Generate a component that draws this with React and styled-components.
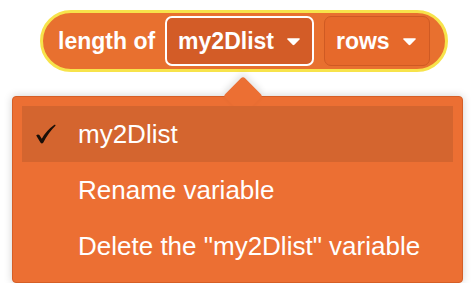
import React from "react";
import styled, { createGlobalStyle } from "styled-components";

const GlobalStyle = createGlobalStyle`
  body {
    margin: 0;
    background: #ffffff;
    font-family: "Liberation Sans", Arial, sans-serif;
  }
`;

const menuItems = [
  { label: "my2Dlist", checked: true },
  { label: "Rename variable" },
  { label: 'Delete the "my2Dlist" variable' },
];

const Caret = () => (
  <svg width="15" height="9" viewBox="0 0 15 9">
    <path
      d="M2 1.2 H13 Q14.4 1.2 13.5 2.4 L8.4 7.8 Q7.5 8.7 6.6 7.8 L1.5 2.4 Q0.6 1.2 2 1.2 Z"
      fill="#ffffff"
    />
  </svg>
);

const CheckMark = () => (
  <svg width="22" height="22" viewBox="0 0 22 22">
    <path
      d="M1.2 12.4 Q3 10.8 4.4 12 L6.8 15.8 Q11 7.8 19.4 1.8 Q21 1.4 20.4 2.8 Q13.4 9.6 8.2 19.8 Q6.9 21.4 5.6 19.8 Z"
      fill="#1a0f08"
    />
  </svg>
);

const App = () => {
  /** UI */
  return (
    <>
      <GlobalStyle />
      <Page>
        <Block>
          <Label>length of</Label>
          <Field $selected>
            my2Dlist
            <Caret />
          </Field>
          <Field>
            rows
            <Caret />
          </Field>
        </Block>
        <Menu>
          <Pointer />
          {menuItems.map((item) => (
            <Item key={item.label} $active={item.checked}>
              <Check>{item.checked && <CheckMark />}</Check>
              {item.label}
            </Item>
          ))}
        </Menu>
      </Page>
    </>
  );
};

export default App;

/** styled component */
const Page = styled.div`
  display: flex;
  flex-direction: column;
  align-items: flex-start;
  padding-top: 10px;
`;

const Block = styled.div`
  display: flex;
  align-items: center;
  box-sizing: border-box;
  height: 62px;
  margin-left: 40px;
  padding: 0 15px 0 15px;
  border: 3px solid #f7e34b;
  border-radius: 31px;
  background-color: #e8702f;
  color: #ffffff;
  font-size: 23px;
  font-weight: bold;
`;

const Label = styled.span`
  margin-right: 10px;
`;

const Field = styled.div`
  display: flex;
  align-items: center;
  gap: 12px;
  box-sizing: border-box;
  height: 50px;
  padding: 0 ${(p) => (p.$selected ? 11 : 12)}px 0
    ${(p) => (p.$selected ? 11 : 11)}px;
  margin-right: 10px;
  border-radius: 7px;
  border: ${(p) => (p.$selected ? "2px solid #ffffff" : "1px solid #cf5a23")};
  background-color: ${(p) => (p.$selected ? "#d35c27" : "#e6692b")};

  &:last-child {
    margin-right: 0;
  }
`;

const Menu = styled.div`
  position: relative;
  box-sizing: border-box;
  width: 451px;
  margin: 24px 0 0 12px;
  padding: 9px 9px 8px 9px;
  border: 1px solid #d55f27;
  border-radius: 4px;
  background-color: #ec6f33;
  box-shadow: 0 0 8px rgba(0, 0, 0, 0.18);
  color: #ffffff;
  font-size: 26px;
`;

const Pointer = styled.div`
  position: absolute;
  top: -15px;
  left: 216px;
  width: 28px;
  height: 28px;
  border-radius: 3px;
  background-color: #ec6f33;
  transform: rotate(45deg);
  box-shadow: -3px -3px 6px rgba(0, 0, 0, 0.1);
  z-index: 0;
`;

const Item = styled.div`
  position: relative;
  z-index: 1;
  display: flex;
  align-items: center;
  height: 56px;
  background-color: ${(p) => (p.$active ? "#d4652f" : "transparent")};
`;

const Check = styled.span`
  display: flex;
  align-items: center;
  width: 56px;
  height: 100%;
  padding-left: 13px;
  box-sizing: border-box;
`;
